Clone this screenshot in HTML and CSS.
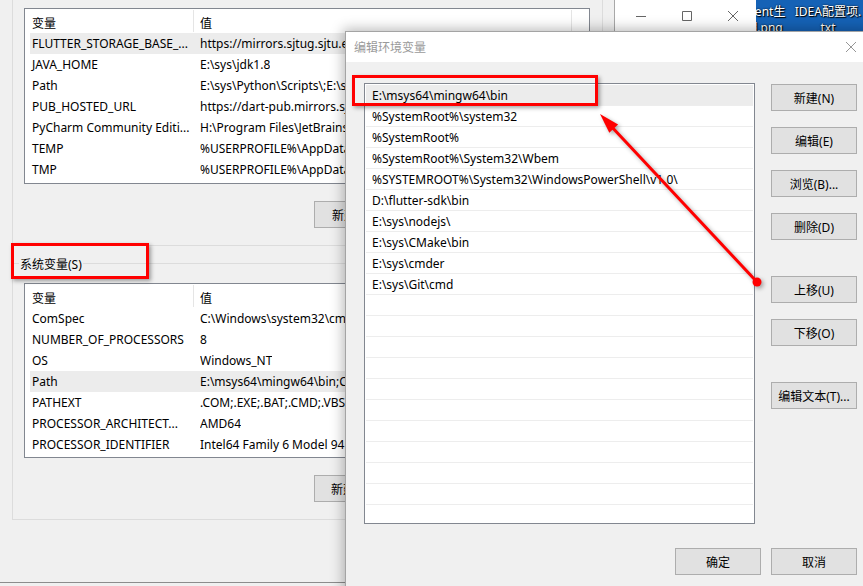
FILE: index.html
```html
<!DOCTYPE html>
<html lang="zh-CN">
<head>
    <meta charset="UTF-8">
    <meta name="viewport" content="width=device-width, initial-scale=1.0">
    <title>编辑环境变量</title>
    <link rel="stylesheet" href="styles.css">
</head>
<body>
<div class="desktop">
    <div class="desk-item item-a">Fragment生<br>命周期.png</div>
    <div class="desk-item item-b">IDEA配置项.<br>txt</div>

    <!-- window in the back, only its caption shows -->
    <div class="win back-win">
        <div class="caption">
            <svg class="cap-icon" viewBox="0 0 10 10"><path d="M0 5.5h10"/></svg>
            <svg class="cap-icon" viewBox="0 0 10 10"><path d="M0.5 0.5h9v9h-9z"/></svg>
            <svg class="cap-icon" viewBox="0 0 10 10"><path d="M0 0l10 10M10 0l-10 10"/></svg>
        </div>
    </div>

    <!-- 环境变量 -->
    <div class="win env-win">
        <div class="group">
            <div class="listview">
                <div class="lv-head">
                    <div class="lv-col col-name">变量</div>
                    <div class="lv-col col-value">值</div>
                    <div class="lv-col col-rest"></div>
                </div>
                <div class="lv-row selected"><span class="cell-name">FLUTTER_STORAGE_BASE_...</span><span class="cell-value">https://mirrors.sjtug.sjtu.edu.cn</span></div>
                <div class="lv-row"><span class="cell-name">JAVA_HOME</span><span class="cell-value">E:\sys\jdk1.8</span></div>
                <div class="lv-row"><span class="cell-name">Path</span><span class="cell-value">E:\sys\Python\Scripts\;E:\sys\Python\;%USERPROFILE%\AppData\Local\Microsoft\WindowsApps;</span></div>
                <div class="lv-row"><span class="cell-name">PUB_HOSTED_URL</span><span class="cell-value">https://dart-pub.mirrors.sjtug.sjtu.edu.cn</span></div>
                <div class="lv-row"><span class="cell-name">PyCharm Community Editi...</span><span class="cell-value">H:\Program Files\JetBrains\PyCharm Community Edition\bin;</span></div>
                <div class="lv-row"><span class="cell-name">TEMP</span><span class="cell-value">%USERPROFILE%\AppData\Local\Temp</span></div>
                <div class="lv-row"><span class="cell-name">TMP</span><span class="cell-value">%USERPROFILE%\AppData\Local\Temp</span></div>
            </div>
            <div class="btn-row">
                <button class="btn">新建(N)...</button>
                <button class="btn">编辑(E)...</button>
                <button class="btn">删除(D)</button>
            </div>
        </div>

        <div class="group sys-group">
            <span class="group-title">系统变量(S)</span>
            <div class="listview">
                <div class="lv-head">
                    <div class="lv-col col-name">变量</div>
                    <div class="lv-col col-value">值</div>
                    <div class="lv-col col-rest"></div>
                </div>
                <div class="lv-row"><span class="cell-name">ComSpec</span><span class="cell-value">C:\Windows\system32\cmd.exe</span></div>
                <div class="lv-row"><span class="cell-name">NUMBER_OF_PROCESSORS</span><span class="cell-value">8</span></div>
                <div class="lv-row"><span class="cell-name">OS</span><span class="cell-value">Windows_NT</span></div>
                <div class="lv-row selected"><span class="cell-name">Path</span><span class="cell-value">E:\msys64\mingw64\bin;C:\Windows\system32;C:\Windows;</span></div>
                <div class="lv-row"><span class="cell-name">PATHEXT</span><span class="cell-value">.COM;.EXE;.BAT;.CMD;.VBS;.VBE;.JS;.JSE;.WSF;.WSH;.MSC</span></div>
                <div class="lv-row"><span class="cell-name">PROCESSOR_ARCHITECT...</span><span class="cell-value">AMD64</span></div>
                <div class="lv-row"><span class="cell-name">PROCESSOR_IDENTIFIER</span><span class="cell-value">Intel64 Family 6 Model 94 Stepping 3, GenuineIntel</span></div>
            </div>
            <div class="btn-row">
                <button class="btn">新建(W)...</button>
                <button class="btn">编辑(I)...</button>
                <button class="btn">删除(L)</button>
            </div>
        </div>
    </div>

    <!-- 编辑环境变量 dialog -->
    <div class="win dialog">
        <div class="dlg-title">
            <span>编辑环境变量</span>
            <svg class="dlg-close" viewBox="0 0 10 10"><path d="M0 0l10 10M10 0l-10 10"/></svg>
        </div>
        <div class="dlg-body">
            <div class="dlg-main">
                <div class="path-list">
                    <div class="path-row selected">E:\msys64\mingw64\bin</div>
                    <div class="path-row">%SystemRoot%\system32</div>
                    <div class="path-row">%SystemRoot%</div>
                    <div class="path-row">%SystemRoot%\System32\Wbem</div>
                    <div class="path-row">%SYSTEMROOT%\System32\WindowsPowerShell\v1.0\</div>
                    <div class="path-row">D:\flutter-sdk\bin</div>
                    <div class="path-row">E:\sys\nodejs\</div>
                    <div class="path-row">E:\sys\CMake\bin</div>
                    <div class="path-row">E:\sys\cmder</div>
                    <div class="path-row">E:\sys\Git\cmd</div>
                    <div class="path-row"></div>
                    <div class="path-row"></div>
                    <div class="path-row"></div>
                    <div class="path-row"></div>
                    <div class="path-row"></div>
                    <div class="path-row"></div>
                    <div class="path-row"></div>
                    <div class="path-row"></div>
                    <div class="path-row"></div>
                    <div class="path-row"></div>
                    <div class="path-row"></div>
                </div>
                <div class="side-btns">
                    <button class="btn">新建(N)</button>
                    <button class="btn">编辑(E)</button>
                    <button class="btn">浏览(B)...</button>
                    <button class="btn">删除(D)</button>
                    <button class="btn spaced">上移(U)</button>
                    <button class="btn">下移(O)</button>
                    <button class="btn spaced">编辑文本(T)...</button>
                </div>
            </div>
            <div class="dlg-foot">
                <button class="btn">确定</button>
                <button class="btn">取消</button>
            </div>
        </div>
    </div>

    <!-- red annotations -->
    <div class="mark mark-row"></div>
    <div class="mark mark-group"></div>
    <svg class="arrow" viewBox="0 0 863 586" width="863" height="586">
        <line x1="757" y1="282" x2="610" y2="125"/>
        <polygon points="600,114 618.1,124.5 609.3,132.7"/>
        <circle cx="757" cy="282" r="4.5"/>
    </svg>
</div>
</body>
</html>
```

FILE: styles.css
```css
* {
    box-sizing: border-box;
}
body {
    margin: 0;
    font-family: "Noto Sans", "Noto Sans CJK SC", sans-serif;
    font-size: 12px;
    color: #000;
}
.desktop {
    position: relative;
    width: 863px;
    height: 586px;
    overflow: hidden;
    background-color: #1562b6;
}

/* desktop icon labels */
.desk-item {
    position: absolute;
    top: 4px;
    width: 76px;
    text-align: center;
    line-height: 16px;
    color: #fff;
    text-shadow: 0 0 2px #000, 1px 1px 1px #000;
}
.item-a {
    left: 714px;
}
.item-b {
    left: 790px;
}

.win {
    position: absolute;
    background-color: #f0f0f0;
}

/* window in the back */
.back-win {
    left: 0;
    top: 0;
    width: 756px;
    height: 586px;
}
.back-win .caption {
    height: 31px;
    background-color: #fff;
    display: flex;
    justify-content: flex-end;
    align-items: center;
    gap: 36px;
    padding-right: 18px;
}
.cap-icon {
    width: 10px;
    height: 10px;
    fill: none;
    stroke: #666;
    stroke-width: 1;
}

/* 环境变量 window */
.env-win {
    left: 0;
    top: -12px;
    width: 615px;
    height: 595px;
    padding: 0 11px 0 12px;
    border-right: 1px solid #a8a8a8;
    border-bottom: 1px solid #8c8c8c;
}
.group {
    position: relative;
    border: 1px solid #dcdcdc;
    padding: 19px 12px 17px 11px;
}
.sys-group {
    margin-top: 17px;
}
.group-title {
    position: absolute;
    left: 6px;
    top: -8px;
    padding: 0 1px;
    line-height: 18px;
    background-color: #f0f0f0;
}
.listview {
    height: 176px;
    border: 1px solid #828790;
    background-color: #fff;
    overflow: hidden;
}
.sys-group .listview {
    height: 175px;
}
.lv-head {
    display: flex;
    height: 24px;
}
.lv-col {
    padding: 4px 0 0 7px;
    border-right: 1px solid #e5e5e5;
    margin: 1px 0 1px;
}
.col-name {
    width: 169px;
}
.col-value {
    width: 378px;
    padding-left: 6px;
}
.col-rest {
    border-right: none;
    flex: 1;
}
.lv-row {
    display: flex;
    height: 21px;
    line-height: 22px;
    margin-left: 5px;
    white-space: nowrap;
    overflow: hidden;
}
.lv-row.selected {
    background-color: #ececec;
}
.cell-name {
    width: 170px;
    flex: none;
    padding-left: 2px;
    overflow: hidden;
}
.cell-value {
    overflow: hidden;
}
.btn-row {
    display: flex;
    justify-content: flex-end;
    gap: 9px;
    margin-top: 17px;
}

.btn {
    width: 86px;
    height: 27px;
    padding: 0;
    font: inherit;
    color: #000;
    background-color: #e1e1e1;
    border: 1px solid #adadad;
}

/* 编辑环境变量 dialog */
.dialog {
    left: 345px;
    top: 31px;
    width: 525px;
    height: 570px;
    border: 1px solid #a4a4a4;
    box-shadow: 0 0 12px 2px rgba(0, 0, 0, 0.28);
}
.dlg-title {
    display: flex;
    align-items: center;
    justify-content: space-between;
    height: 30px;
    padding: 0 13px 0 8px;
    background-color: #fff;
    color: #9a9a9a;
}
.dlg-close {
    width: 10px;
    height: 10px;
    fill: none;
    stroke: #8a8a8a;
    stroke-width: 0.9;
}
.dlg-body {
    padding: 21px 12px 0 18px;
}
.dlg-main {
    display: flex;
}
.path-list {
    width: 391px;
    height: 441px;
    padding: 1px;
    border: 1px solid #828790;
    background-color: #fff;
    overflow: hidden;
}
.path-row {
    height: 21px;
    line-height: 22px;
    padding-left: 6px;
    border-bottom: 1px solid #ededed;
    white-space: nowrap;
}
.path-row.selected {
    background-color: #ececec;
}
.side-btns {
    display: flex;
    flex-direction: column;
    gap: 16px;
    margin-left: 16px;
    padding-top: 1px;
}
.side-btns .spaced {
    margin-top: 20px;
}
.dlg-foot {
    display: flex;
    justify-content: flex-end;
    gap: 10px;
    margin-top: 24px;
}

/* red annotations over the screenshot */
.mark {
    position: absolute;
    border: 3px solid #f00;
    box-shadow: 2px 2px 4px rgba(0, 0, 0, 0.35);
}
.mark-row {
    left: 352px;
    top: 75px;
    width: 246px;
    height: 31px;
}
.mark-group {
    left: 11px;
    top: 243px;
    width: 138px;
    height: 36px;
}
.arrow {
    position: absolute;
    left: 0;
    top: 0;
    pointer-events: none;
    filter: drop-shadow(2px 2px 2px rgba(0, 0, 0, 0.35));
}
.arrow line {
    stroke: #f00;
    stroke-width: 3;
}
.arrow polygon,
.arrow circle {
    fill: #f00;
}
```
